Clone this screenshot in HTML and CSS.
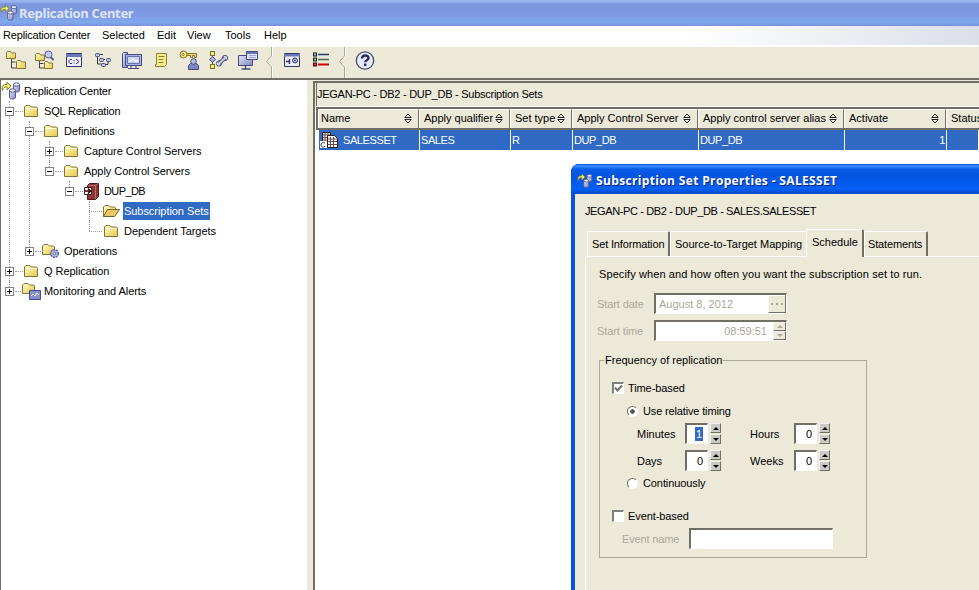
FILE: index.html
```html
<!DOCTYPE html>
<html lang="en">
<head>
    <meta charset="UTF-8">
    <title>Replication Center</title>
    <link rel="stylesheet" href="styles.css">
</head>
<body>
<!-- Shared icons -->
<svg class="defs" width="0" height="0">
    <defs>
        <linearGradient id="gold" x1="0" y1="0" x2="1" y2="1">
            <stop offset="0" stop-color="#fffbc4"/>
            <stop offset="1" stop-color="#e8c84c"/>
        </linearGradient>
        <linearGradient id="steel" x1="0" y1="0" x2="1" y2="1">
            <stop offset="0" stop-color="#e4e6fa"/>
            <stop offset="1" stop-color="#8088c4"/>
        </linearGradient>
        <symbol id="folder" viewBox="0 0 16 14">
            <path d="M.5 12.500V3L2 1.500h4L7.500 3h5l1 1v8.500z" fill="url(#gold)" stroke="#85743a"/>
            <path d="M1.500 4.500h11" stroke="#fffce0"/>
        </symbol>
        <symbol id="folder-open" viewBox="0 0 18 14">
            <path d="M.5 12.500V3L2 1.500h4L7.500 3h4l1 1v3" fill="url(#gold)" stroke="#85743a"/>
            <path d="M.5 12.500l4-7h12l-5 7z" fill="#ecc964" stroke="#74602c"/>
        </symbol>
        <symbol id="app" viewBox="0 0 20 20">
            <path d="M12.500 3.500v6c0 2 6 2 6 0v-6" fill="url(#steel)" stroke="#555a85"/>
            <ellipse cx="15.500" cy="3.500" rx="3" ry="1.700" fill="#eef0ff" stroke="#555a85"/>
            <path d="M8.500 9.500v7c0 2 6 2 6 0v-7" fill="url(#steel)" stroke="#555a85"/>
            <ellipse cx="11.500" cy="9.500" rx="3" ry="1.700" fill="#eef0ff" stroke="#555a85"/>
            <path d="M1.500 9.500C0 5 3 3 6 3.500V1l4 4-4 4V6C4 5.500 2 6.500 1.500 9.500z" fill="#f5ec6a" stroke="#85803c"/>
        </symbol>
        <symbol id="sort" viewBox="0 0 8 11">
            <path d="M.8 4.500L4 1l3.200 3.500zM.8 6.500h6.400L4 10z" fill="#f8f6ea" stroke="#222"/>
        </symbol>
    </defs>
</svg>

<header class="titlebar">
    <svg class="app-icon" width="18" height="18"><use href="#app"/></svg>
    <h1>Replication Center</h1>
</header>

<nav class="menu">
    <span class="m1">Replication Center</span>
    <span class="m2">Selected</span>
    <span class="m3">Edit</span>
    <span class="m4">View</span>
    <span class="m5">Tools</span>
    <span class="m6">Help</span>
</nav>

<div class="toolbar">
    <span class="tool"><svg width="22" height="22">
        <path d="M6.500 9v9h5M6.500 12h4" fill="none" stroke="#444"/>
        <path d="M1.500 8.500v-6l1-1h3l1 1.500h4v5.500z" fill="url(#gold)" stroke="#85743a"/>
        <path d="M11.500 18.500v-7l1-1h3l1 1.500h4v6.500z" fill="url(#gold)" stroke="#85743a"/>
    </svg></span>
    <span class="tool"><svg width="22" height="22">
        <path d="M5.500 11v7h6M5.500 13.500h4" fill="none" stroke="#444"/>
        <path d="M1.500 10.500v-6l1-1h3l1 1.500h4v5.500z" fill="url(#gold)" stroke="#85743a"/>
        <path d="M10.500 18.500v-6l1-1h2l1 1.500h4v5.500z" fill="url(#gold)" stroke="#85743a"/>
        <path d="M16.500 7l3 3" stroke="#555a85" stroke-width="2"/>
        <circle cx="14.500" cy="4.500" r="3.500" fill="#c5cafa" stroke="#555a95"/>
    </svg></span>
    <span class="tool"><svg width="22" height="22">
        <path d="M3.500 3.500h15v13h-15z" fill="#eef" stroke="#303868"/>
        <path d="M3 4h16v3H3z" fill="#6a74b8"/>
        <path d="M9 9.500H7l-1 1v2l1 1h2M11 10v1M11 12.500v1M13 9l3 2.500-3 2.500" fill="none" stroke="#303868"/>
    </svg></span>
    <span class="tool"><svg width="22" height="22">
        <path d="M8 4.500h3M5.500 7v7h4M8 9.500h5M13 14.500h3v-4" fill="none" stroke="#333"/>
        <g fill="#bfc4ee" stroke="#444a7c">
            <rect x="3.500" y="3.500" width="4" height="3" rx="1"/>
            <rect x="7.500" y="8.500" width="4" height="3" rx="1"/>
            <rect x="9.500" y="13.500" width="4" height="3" rx="1"/>
            <rect x="14.500" y="8.500" width="4" height="3" rx="1"/>
        </g>
    </svg></span>
    <span class="tool"><svg width="22" height="22">
        <path d="M1.500 3.500l1-1h4v15h-5z" fill="url(#steel)" stroke="#444a7c"/>
        <path d="M4.500 4.500h16v11h-16z" fill="#a9b0e4" stroke="#444a7c"/>
        <path d="M6.500 6.500h12v7h-12z" fill="#cfd5fa" stroke="#6870a8"/>
        <path d="M8 11h2l2-2 2 2h3" fill="none" stroke="#fff"/>
        <path d="M10 16v2M15 16v2M7 18.500h11" stroke="#444a7c"/>
    </svg></span>
    <span class="tool"><svg width="22" height="22">
        <path d="M6.500 3.500h10v11l-2 2h-9v-2h1z" fill="#f7ef86" stroke="#85803c"/>
        <path d="M8.500 6.500h6M8.500 9.500h5M8.500 12.500h5" stroke="#85803c"/>
    </svg></span>
    <span class="tool"><svg width="22" height="22">
        <path d="M7.500 3.500h10v4h-2v-2h-2v2h-2v-2h-4z" fill="#f3dc62" stroke="#85743a"/>
        <circle cx="4.500" cy="4.500" r="3.500" fill="#f8e878" stroke="#85743a"/>
        <circle cx="4" cy="4.500" r="1" fill="#fff" stroke="#85743a"/>
        <path d="M9.500 19.500v-4l2-2h6l2 2v4z" fill="#7f86c4" stroke="#444a7c"/>
        <circle cx="14.500" cy="11.500" r="2.800" fill="#b7bcea" stroke="#444a7c"/>
    </svg></span>
    <span class="tool"><svg width="22" height="22">
        <path d="M4.500 5v12" stroke="#444"/>
        <rect x="2.500" y="1.500" width="4" height="4" fill="#f5ec6a" stroke="#77702c"/>
        <path d="M4.500 6.500l3 3-3 3-3-3z" fill="#a9b0e4" stroke="#444a7c"/>
        <rect x="2.500" y="14.500" width="4" height="4" fill="#f5ec6a" stroke="#77702c"/>
        <circle cx="11" cy="13.500" r="2.700" fill="#d5d8ee" stroke="#555a75"/>
        <circle cx="17" cy="8" r="2.700" fill="#d5d8ee" stroke="#555a75"/>
        <path d="M11 13.500l6-5.500" stroke="#555a75" stroke-width="4"/>
        <path d="M10.500 14l7-6.500" stroke="#c5cae8" stroke-width="2"/>
    </svg></span>
    <span class="tool"><svg width="22" height="22">
        <path d="M1.500 5.500h14v10h-14z" fill="url(#steel)" stroke="#444a7c"/>
        <path d="M8.500 16v3M4.500 19h9" stroke="#444a7c" stroke-width="1.500"/>
        <path d="M9.500 1.500h11v8h-11z" fill="#dfe2fb" stroke="#444a7c"/>
        <path d="M10 3h10" stroke="#6a74b8" stroke-width="2"/>
        <path d="M12 5.500h7M12 7.500h7" stroke="#9fa6d8"/>
    </svg></span>
    <span class="grip"><svg width="15" height="31"><path d="M10.500 0v9l-5 5.500 5 5.500v11" fill="none" stroke="#fff"/><path d="M9.500 0v9l-5 5.500 5 5.500v11" fill="none" stroke="#aca899"/></svg></span>
    <span class="tool"><svg width="22" height="22">
        <path d="M3.500 3.500h15v13h-15z" fill="#eef" stroke="#303868"/>
        <path d="M3 4h16v2.500H3z" fill="#6a74b8"/>
        <path d="M5 11.500h3M8.500 9v5" fill="none" stroke="#303868" stroke-width="1.500"/>
        <circle cx="14" cy="10.500" r="2.500" fill="#b7bcea" stroke="#303868"/>
        <circle cx="14" cy="10.500" r=".8" fill="#303868"/>
    </svg></span>
    <span class="tool"><svg width="22" height="22">
        <path d="M8 4.500h11" stroke="#33386e" stroke-width="1.500"/>
        <path d="M8 9.500h11" stroke="#4c6a4c" stroke-width="1.500"/>
        <path d="M8 14.500h11" stroke="#c00" stroke-width="2"/>
        <rect x="3.500" y="3" width="3" height="3" fill="#a9b0e4" stroke="#222"/>
        <rect x="3.500" y="8" width="3" height="3" fill="#8fbf8f" stroke="#222"/>
        <rect x="3.500" y="13" width="3" height="3" fill="#e33" stroke="#400"/>
    </svg></span>
    <span class="grip"><svg width="15" height="31"><path d="M10.500 0v9l-5 5.500 5 5.500v11" fill="none" stroke="#fff"/><path d="M9.500 0v9l-5 5.500 5 5.500v11" fill="none" stroke="#aca899"/></svg></span>
    <span class="tool"><svg width="22" height="22">
        <circle cx="11" cy="10.500" r="8.700" fill="#e8eafc" stroke="#444a6c" stroke-width="1.300"/>
        <path d="M8 8.500c0-4 6.500-4 6.500-.5 0 2.500-3.300 2-3.300 4.300M11.200 13.600v2.400" fill="none" stroke="#262c5c" stroke-width="2.400"/>
    </svg></span>
</div>

<main class="workspace">
    <section class="tree">
        <div class="node root">
            <svg width="20" height="20"><use href="#app"/></svg>
            <span class="label t-root">Replication Center</span>
        </div>
        <ul>
            <li>
                <div class="node"><i class="toggle"></i><svg class="icon" width="16" height="14"><use href="#folder"/></svg><span class="label t-sql">SQL Replication</span></div>
                <ul>
                    <li>
                        <div class="node"><i class="toggle"></i><svg class="icon" width="16" height="14"><use href="#folder"/></svg><span class="label">Definitions</span></div>
                        <ul>
                            <li><div class="node"><i class="toggle plus"></i><svg class="icon" width="16" height="14"><use href="#folder"/></svg><span class="label">Capture Control Servers</span></div></li>
                            <li>
                                <div class="node"><i class="toggle"></i><svg class="icon" width="16" height="14"><use href="#folder"/></svg><span class="label">Apply Control Servers</span></div>
                                <ul>
                                    <li>
                                        <div class="node"><i class="toggle"></i><svg class="icon" width="16" height="18">
                                            <path d="M3.500 3.500l2-2h9v13l-3 3h-8z" fill="#8c3434" stroke="#4c1818"/>
                                            <path d="M11.500 17V3.500h-7M11.500 3.500l2-2" fill="none" stroke="#b86c6c"/>
                                            <path d="M.5 5.500h7v7h-7z" fill="#fff" stroke="#4c1818"/>
                                            <path d="M1 9h5M4 6.500L6.500 9 4 11.500" fill="none" stroke="#300" stroke-width="1.500"/>
                                        </svg><span class="label t-db">DUP_DB</span></div>
                                        <ul>
                                            <li><div class="node leaf"><i class="branch"></i><svg class="icon" width="18" height="14"><use href="#folder-open"/></svg><span class="label selected">Subscription Sets</span></div></li>
                                            <li><div class="node leaf"><i class="branch"></i><svg class="icon" width="18" height="14"><use href="#folder"/></svg><span class="label">Dependent Targets</span></div></li>
                                        </ul>
                                    </li>
                                </ul>
                            </li>
                        </ul>
                    </li>
                    <li>
                        <div class="node"><i class="toggle plus"></i><svg class="icon wide" width="19" height="18">
                            <path d="M.5 12.500V4L2 2.500h4L7.500 4h4l1 1v7.500z" fill="url(#gold)" stroke="#85743a"/>
                            <circle cx="12.500" cy="11.500" r="3.800" fill="#b7c0ea" stroke="#5560a0" stroke-width="1.500" stroke-dasharray="2 .7"/>
                            <circle cx="12.500" cy="11.500" r="1.300" fill="#fff" stroke="#5560a0"/>
                        </svg><span class="label">Operations</span></div>
                    </li>
                </ul>
            </li>
            <li><div class="node"><i class="toggle plus"></i><svg class="icon" width="16" height="14"><use href="#folder"/></svg><span class="label">Q Replication</span></div></li>
            <li><div class="node"><i class="toggle plus"></i><svg class="icon wide" width="19" height="18">
                <path d="M.5 11.500V3L2 1.500h4L7.500 3h4l1 1v7.500z" fill="url(#gold)" stroke="#85743a"/>
                <path d="M7.500 8.500h11v9h-11z" fill="#8890d0" stroke="#444a8c"/>
                <path d="M9 14l2-2 2 2 2-3 2 2" fill="none" stroke="#fff"/>
            </svg><span class="label">Monitoring and Alerts</span></div></li>
        </ul>
    </section>

    <section class="details">
        <div class="path">JEGAN-PC - DB2 - DUP_DB - Subscription Sets</div>
        <div class="grid head">
            <span>Name<svg width="8" height="11"><use href="#sort"/></svg></span>
            <span>Apply qualifier<svg width="8" height="11"><use href="#sort"/></svg></span>
            <span>Set type<svg width="8" height="11"><use href="#sort"/></svg></span>
            <span>Apply Control Server<svg width="8" height="11"><use href="#sort"/></svg></span>
            <span>Apply control server alias<svg width="8" height="11"><use href="#sort"/></svg></span>
            <span>Activate<svg width="8" height="11"><use href="#sort"/></svg></span>
            <span>Status</span>
        </div>
        <div class="grid row">
            <span class="name"><svg width="20" height="18">
                <path d="M3.500 1.500h8v11h-8z" fill="#fff" stroke="#222"/>
                <path d="M4 4h7M4 6.500h7M4 9h7M6 2v10M9 2v10" stroke="#744"/>
                <path d="M8.500 4.500h7l3 3v9h-10z" fill="#fff" stroke="#222"/>
                <path d="M9 8h9M9 10.500h9M9 13.500h9M11.500 6v10M14.500 6v10" stroke="#744"/>
                <path d="M1 10h7v7H1z" fill="#fff"/>
                <path d="M6 12c-2-1-4 0-4 2s3 3 4 1" fill="none" stroke="#335"/>
            </svg>SALESSET</span>
            <span>SALES</span>
            <span>R</span>
            <span>DUP_DB</span>
            <span>DUP_DB</span>
            <span class="num">1</span>
            <span></span>
        </div>
    </section>
</main>

<!-- Properties window -->
<div class="dialog">
    <div class="dialog-title">
        <svg width="16" height="16"><use href="#app"/></svg>
        <h2>Subscription Set Properties - SALESSET</h2>
    </div>
    <div class="dialog-body">
        <p class="object">JEGAN-PC - DB2 - DUP_DB - SALES.SALESSET</p>
        <div class="tabs">
            <span class="tab tab-info">Set Information</span>
            <span class="tab tab-map">Source-to-Target Mapping</span>
            <span class="tab tab-schedule active">Schedule</span>
            <span class="tab tab-sql">Statements</span>
        </div>
        <div class="panel">
            <p class="hint">Specify when and how often you want the subscription set to run.</p>
            <div class="line disabled">
                <label>Start date</label>
                <div class="field date"><span>August 8, 2012</span><b class="more"><i></i><i></i><i></i></b></div>
            </div>
            <div class="line disabled">
                <label>Start time</label>
                <div class="field time"><span>08:59:51</span><b class="spin"><i class="up"></i><i class="down"></i></b></div>
            </div>
            <fieldset>
                <legend>Frequency of replication</legend>
                <div class="option check"><i class="box"><svg width="9" height="9"><path d="M1 3.500l2.500 3L8 1.500" fill="none" stroke="#716f64" stroke-width="2"/></svg></i><span>Time-based</span></div>
                <div class="option radio"><i class="dot on"></i><span class="t-relative">Use relative timing</span></div>
                <div class="timing">
                    <label>Minutes</label><div class="field count"><mark>1</mark></div><b class="spin"><i class="up"></i><i class="down"></i></b>
                    <label>Hours</label><div class="field count">0</div><b class="spin"><i class="up"></i><i class="down"></i></b>
                    <label>Days</label><div class="field count">0</div><b class="spin"><i class="up"></i><i class="down"></i></b>
                    <label>Weeks</label><div class="field count">0</div><b class="spin"><i class="up"></i><i class="down"></i></b>
                </div>
                <div class="option radio last"><i class="dot"></i><span>Continuously</span></div>
                <div class="option check event"><i class="box"></i><span>Event-based</span></div>
                <div class="event-name disabled"><label>Event name</label><div class="field"></div></div>
            </fieldset>
        </div>
    </div>
</div>
</body>
</html>
```
FILE: styles.css
```css
* {
    box-sizing: border-box;
}

body {
    margin: 0;
    width: 979px;
    height: 590px;
    overflow: hidden;
    display: flex;
    flex-direction: column;
    position: relative;
    background: #ece9d8;
    color: #000;
    font-family: "Liberation Sans", Arial, sans-serif;
    font-size: 11px;
    line-height: 14px;
    white-space: nowrap;
}

svg {
    display: block;
    flex: none;
}

.defs {
    position: absolute;
}

h1, h2, p, ul {
    margin: 0;
    padding: 0;
}

i, b {
    font-style: normal;
    flex: none;
}

/* Main window */
.titlebar {
    height: 26px;
    flex: none;
    display: flex;
    align-items: center;
    background: linear-gradient(#9db9f2 0, #96b2ee 2px, #7b95de 4px, #7f99e2 15px, #80aaee 22px, #7a8fdc 26px);
}

.titlebar h1 {
    margin-left: 1px;
    font: bold 13px/18px "Open Sans", "Noto Sans", sans-serif;
    letter-spacing: -0.33px;
    color: #dce5fa;
}

.menu {
    height: 21px;
    flex: none;
    display: flex;
    padding: 2px 0 0 3px;
    background: linear-gradient(90deg, #fff 70%, #dcdfe8);
    border-bottom: 2px solid #fff;
}

.menu span {
    flex: none;
}

.m1 {
    width: 99px;
    letter-spacing: -0.18px;
}

.m2 { width: 55px; }
.m3 { width: 30px; }
.m4 { width: 38px; }
.m5 { width: 39px; }

.toolbar {
    height: 31px;
    flex: none;
    display: flex;
    padding-left: 1px;
}

.tool {
    width: 29px;
    display: flex;
    justify-content: center;
    padding-top: 3px;
}

.workspace {
    flex: 1;
    min-height: 0;
    display: flex;
    border-top: 2px solid #716f64;
}

/* Tree */
.tree {
    width: 307px;
    flex: none;
    background: #fff;
    border-left: 1px solid #716f64;
    padding-top: 1px;
}

.tree ul {
    list-style: none;
    margin-left: 20px;
}

.tree > ul {
    margin-left: 4px;
}

.tree li {
    position: relative;
}

.tree li::before {
    content: "";
    position: absolute;
    left: 4px;
    top: 0;
    bottom: 0;
    border-left: 1px dotted #999;
}

.tree li:last-child::before {
    bottom: auto;
    height: 10px;
}

.node {
    height: 20px;
    display: flex;
    align-items: center;
    position: relative;
}

.label {
    line-height: 18px;
    padding: 0 1px;
    letter-spacing: -0.05px;
}

.root .label {
    margin-left: 2px;
}

.t-root, .t-sql {
    letter-spacing: -0.18px;
}

.t-db {
    letter-spacing: -0.6px;
}

.icon {
    width: 16px;
    margin-right: 3px;
}

.icon.wide {
    width: 19px;
    margin-left: -2px;
    margin-right: 2px;
}

.toggle {
    width: 9px;
    height: 9px;
    margin-right: 10px;
    border: 1px solid #848284;
    background: linear-gradient(#000, #000) center / 5px 1px no-repeat #fff;
    position: relative;
}

.toggle::after {
    content: "";
    position: absolute;
    left: 9px;
    top: 3px;
    width: 8px;
    border-top: 1px dotted #999;
}

.plus {
    background: linear-gradient(#000, #000) center / 5px 1px no-repeat, linear-gradient(#000, #000) center / 1px 5px no-repeat #fff;
}

.branch {
    width: 13px;
    margin: 0 1px 0 4px;
    border-top: 1px dotted #999;
}

.leaf .icon {
    width: 18px;
    margin-right: 2px;
}

.selected {
    background: #316ac5;
    color: #fff;
}

/* Result list */
.details {
    flex: 1;
    min-width: 0;
    margin: 1px 0 0 6px;
    border-left: 2px solid #716f64;
    border-top: 2px solid #716f64;
    padding-left: 1px;
    background: #fff linear-gradient(#ece9d8, #ece9d8) 0 0 / 100% 23px no-repeat;
}

.path {
    height: 23px;
    line-height: 22px;
    letter-spacing: -0.26px;
    border-left: 1px solid #716f64;
}

.grid {
    display: grid;
    grid-template-columns: 101px 91px 62px 126px 146px 102px 1fr;
}

.head {
    height: 23px;
    margin-top: 1px;
    border: solid #716f64;
    border-width: 2px 0 2px 2px;
    background: #ece9d8;
}

.head span {
    display: flex;
    align-items: center;
    justify-content: space-between;
    padding: 0 6px 2px 4px;
    border-left: 1px solid #fff;
    border-right: 1px solid #716f64;
    border-top: 1px solid #fff;
}

.head span:first-child {
    padding-left: 2px;
}

.row {
    height: 20px;
    margin-left: 3px;
    background: #316ac5;
    color: #fff;
    line-height: 20px;
    letter-spacing: -0.4px;
}

.row span {
    border-right: 1px solid #fff;
    padding-left: 1px;
    display: flex;
    align-items: center;
}

.row .name {
    gap: 4px;
    padding-left: 0;
}

.row .num {
    justify-content: flex-end;
    padding-right: 1px;
}

/* Dialog */
.dialog {
    position: absolute;
    left: 571px;
    top: 164px;
    width: 420px;
    height: 440px;
    background: #0653e0;
    border-radius: 8px 0 0 0;
    display: flex;
    flex-direction: column;
    overflow: hidden;
}

.dialog-title {
    height: 30px;
    flex: none;
    display: flex;
    align-items: center;
    padding: 4px 0 0 6px;
    background: linear-gradient(#0a4fd0 0, #3a90ff 2px, #0a5ce8 5px, #0454e2 12px, #0560f4 25px, #0448c8 30px);
}

.dialog-title h2 {
    margin-left: 3px;
    font: bold 12px/18px "Open Sans", "Noto Sans", sans-serif;
    letter-spacing: 0.35px;
    color: #fff;
    text-shadow: 1px 1px #0a2a80;
}

.dialog-body {
    flex: 1;
    margin-left: 4px;
    background: #ece9d8;
    padding: 10px 0 0 10px;
}

.object {
    height: 25px;
    letter-spacing: -0.38px;
}

.tabs {
    height: 27px;
    display: flex;
    align-items: flex-end;
    padding-left: 2px;
}

.tab {
    height: 25px;
    padding: 5px 0 0 4px;
    border: solid #fff;
    border-width: 1px 0 0 1px;
    border-right: 2px solid #716f64;
    border-radius: 2px 2px 0 0;
}

.tab-info {
    width: 83px;
    letter-spacing: -0.15px;
}

.tab-map { width: 136px; border-right: 0; }
.tab-schedule { width: 58px; }

.tab-sql {
    width: 64px;
    padding-left: 3px;
    letter-spacing: -0.15px;
}

.tab.active {
    height: 28px;
    margin-bottom: -1px;
    padding: 5px 0 0 5px;
    background: #ece9d8;
    position: relative;
}

.panel {
    height: 400px;
    border: solid #fff;
    border-width: 1px 0 0 1px;
    padding: 10px 0 0 11px;
}

.hint {
    padding-left: 2px;
    height: 26px;
    letter-spacing: 0.1px;
}

.line {
    height: 27px;
    display: flex;
    align-items: flex-start;
}

.line label {
    width: 57px;
    padding-top: 4px;
    letter-spacing: -0.1px;
}

.disabled {
    color: #aca899;
}

.field {
    height: 21px;
    display: flex;
    align-items: center;
    background: #fff;
    border: 1px solid #fff;
    border-top: 2px solid #716f64;
    border-left: 2px solid #716f64;
}

.date, .time {
    width: 133px;
    justify-content: space-between;
    padding-left: 3px;
}

.more {
    width: 18px;
    height: 18px;
    display: flex;
    align-items: center;
    justify-content: center;
    gap: 3px;
    background: #ece9d8;
    border: 1px solid #fff;
    border-right-color: #716f64;
    border-bottom-color: #716f64;
}

.more i {
    width: 2px;
    height: 2px;
    background: #aca899;
}

.time {
    justify-content: flex-end;
}

.time .spin {
    width: 13px;
    margin-left: 6px;
}

.spin {
    width: 11px;
    display: flex;
    flex-direction: column;
    gap: 1px;
}

.spin i {
    height: 10px;
    background: #cdcac6;
    border: 1px solid #f4f2ee;
    border-right-color: #716f64;
    border-bottom-color: #716f64;
    display: flex;
    align-items: center;
    justify-content: center;
}

.spin i::before {
    content: "";
    border: 3px solid transparent;
}

.spin .up::before {
    border-bottom-color: #000;
    border-top-width: 0;
}

.spin .down::before {
    border-top-color: #000;
    border-bottom-width: 0;
}

.disabled .spin {
    gap: 0;
}

.disabled .spin i {
    height: 9px;
    background: #ece9d8;
}

.disabled .spin .up::before {
    border-bottom-color: #aca899;
}

.disabled .spin .down::before {
    border-top-color: #aca899;
}

fieldset {
    width: 268px;
    height: 205px;
    margin: 6px 0 0 2px;
    padding: 0 0 0 12px;
    border: 1px solid #aca899;
}

legend {
    margin-left: -8px;
    padding: 0 1px;
    height: 14px;
}

.option {
    display: flex;
    align-items: center;
    height: 14px;
}

.check {
    margin-top: 14px;
}

.check span {
    margin-left: 4px;
    letter-spacing: -0.1px;
}

.box {
    width: 12px;
    height: 12px;
    background: #fff;
    border: 1px solid #fff;
    border-top: 2px solid #808080;
    border-left: 2px solid #808080;
}

.radio {
    margin: 9px 0 0 15px;
}

.radio span {
    margin-left: 5px;
    letter-spacing: -0.1px;
}

.radio .t-relative {
    letter-spacing: -0.15px;
}

.radio.last {
    margin-top: 5px;
}

.dot {
    width: 11px;
    height: 11px;
    border-radius: 50%;
    background: #fff;
    border: 1px solid #fff;
    border-top-color: #716f64;
    border-left-color: #716f64;
}

.on {
    background: radial-gradient(#555 0 2px, #fff 2.500px);
}

.timing {
    display: grid;
    grid-template-columns: 48px 25px 40px 44px 25px 11px;
    row-gap: 6px;
    align-items: center;
    margin: 5px 0 0 25px;
}

.count {
    width: 23px;
    justify-content: flex-end;
    padding-right: 4px;
}

.timing mark {
    background: #316ac5;
    color: #fff;
    padding: 0 1px;
}

.event {
    margin-top: 19px;
}

.event-name {
    display: flex;
    align-items: center;
    margin: 5px 0 0 10px;
}

.event-name label {
    width: 67px;
    letter-spacing: -0.15px;
}

.event-name .field {
    width: 144px;
}
```
